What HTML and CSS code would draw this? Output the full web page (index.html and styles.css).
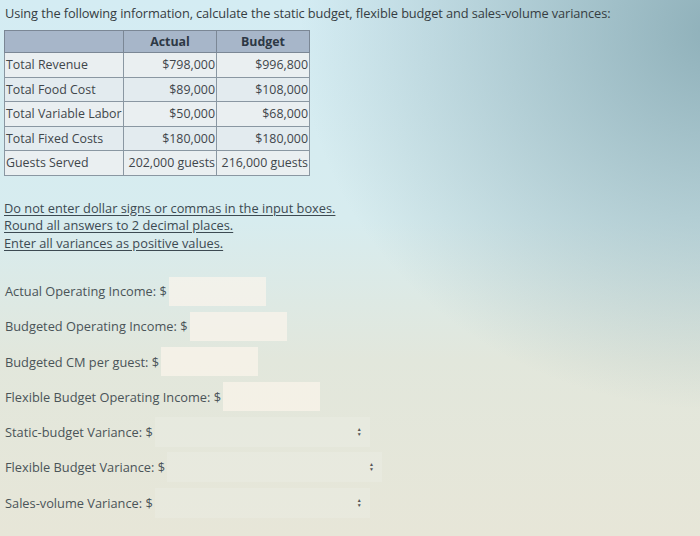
FILE: index.html
```html
<!DOCTYPE html>
<html>
<head>
<meta charset="utf-8">
<link rel="stylesheet" href="styles.css">
</head>
<body>
<div class="page">
  <p class="title">Using the following information, calculate the static budget, flexible budget and sales-volume variances:</p>
  <table class="data">
    <thead>
      <tr><th class="c1"></th><th class="c2">Actual</th><th class="c3">Budget</th></tr>
    </thead>
    <tbody>
      <tr><td class="c1">Total Revenue</td><td class="num">$798,000</td><td class="num">$996,800</td></tr>
      <tr><td class="c1">Total Food Cost</td><td class="num">$89,000</td><td class="num">$108,000</td></tr>
      <tr><td class="c1">Total Variable Labor</td><td class="num">$50,000</td><td class="num">$68,000</td></tr>
      <tr><td class="c1">Total Fixed Costs</td><td class="num">$180,000</td><td class="num">$180,000</td></tr>
      <tr><td class="c1">Guests Served</td><td class="num">202,000 guests</td><td class="num">216,000 guests</td></tr>
    </tbody>
  </table>

  <div class="notes">
    <p>Do not enter dollar signs or commas in the input boxes.</p>
    <p>Round all answers to 2 decimal places.</p>
    <p>Enter all variances as positive values.</p>
  </div>

  <div class="fields">
    <div class="field"><span class="lbl">Actual Operating Income: $</span><span class="box"></span></div>
    <div class="field"><span class="lbl">Budgeted Operating Income: $</span><span class="box"></span></div>
    <div class="field"><span class="lbl">Budgeted CM per guest: $</span><span class="box"></span></div>
    <div class="field"><span class="lbl">Flexible Budget Operating Income: $</span><span class="box"></span></div>
    <div class="field"><span class="lbl">Static-budget Variance: $</span><span class="sel"><span class="arr">&#x25B2;<br>&#x25BC;</span></span></div>
    <div class="field"><span class="lbl">Flexible Budget Variance: $</span><span class="sel"><span class="arr">&#x25B2;<br>&#x25BC;</span></span></div>
    <div class="field"><span class="lbl">Sales-volume Variance: $</span><span class="sel"><span class="arr">&#x25B2;<br>&#x25BC;</span></span></div>
  </div>
</div>
</body>
</html>
```

FILE: styles.css
```css
html, body {
  margin: 0;
  padding: 0;
}
body {
  width: 700px;
  height: 536px;
  overflow: hidden;
  font-family: "Open Sans", "Noto Sans", "Liberation Sans", sans-serif;
  color: #3c4347;
  background:
    radial-gradient(ellipse 420px 380px at 720px 30px, rgba(130,165,175,0.85), rgba(150,180,188,0) 100%),
    linear-gradient(180deg, #d4ecf3 0px, #d7ecef 220px, #e2e7dc 360px, #e7e6d8 536px);
}
.page {
  padding: 4px 0 0 4px;
}
.title {
  margin: 0 0 0 1px;
  font-size: 12.8px;
  line-height: 18px;
  color: #363d42;
  letter-spacing: -0.1px;
}
.data {
  margin-top: 8px;
  border-collapse: collapse;
  font-size: 12.4px;
  color: #3f464b;
}
.data th {
  background: #a7b6c9;
  height: 20px;
  font-weight: bold;
  text-align: center;
  color: #2d3845;
  border: 1px solid #7b8795;
  padding: 0 0 1px;
}
.data td {
  background: #e3ebef;
  border: 1px solid #8a97a2;
  height: 23.5px;
  padding: 0 1px;
  white-space: nowrap;
}
.data tbody tr:nth-child(odd) td { background: #eaeff1; }
.data .c1 { width: 116px; text-align: left; }
.data .c2 { width: 92px; }
.data .c3 { width: 92px; }
.data .num { text-align: right; }
.notes {
  margin-top: 24px;
  font-size: 12.8px;
  color: #3c4a52;
}
.notes p {
  margin: 0;
  line-height: 17.5px;
  text-decoration: underline;
  text-underline-offset: 2px;
}
.fields {
  margin-top: 24px;
  display: flex;
  flex-direction: column;
  gap: 5.3px;
}
.field {
  display: flex;
  align-items: center;
  height: 30px;
  font-size: 12.8px;
  color: #4a5458;
}
.lbl { padding-left: 1px; }
.box {
  display: inline-block;
  width: 97px;
  height: 29px;
  margin-left: 2px;
  background: rgba(253, 246, 236, 0.65);
}
.sel {
  display: flex;
  align-items: center;
  justify-content: flex-end;
  width: 215px;
  height: 30px;
  margin-left: 2px;
  background: rgba(236, 238, 228, 0.45);
  padding-right: 8px;
  box-sizing: border-box;
}
.arr {
  font-size: 5px;
  line-height: 5px;
  color: #555;
  text-align: center;
}
```
